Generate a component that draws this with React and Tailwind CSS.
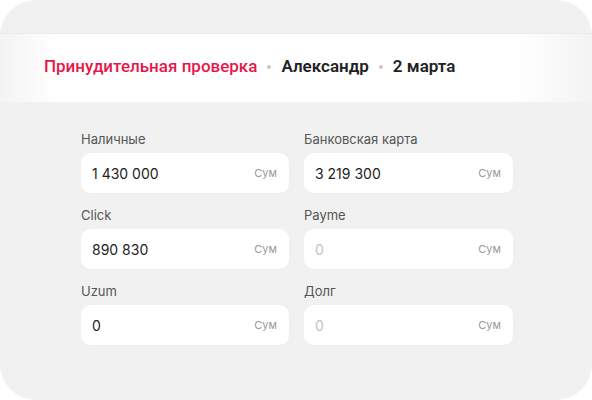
const fields = [
  { label: 'Наличные', value: '1 430 000' },
  { label: 'Банковская карта', value: '3 219 300' },
  { label: 'Click', value: '890 830' },
  { label: 'Payme', value: '', placeholder: '0' },
  { label: 'Uzum', value: '0' },
  { label: 'Долг', value: '', placeholder: '0' },
];

function Field({ label, value, placeholder }) {
  return (
    <div className="flex flex-col">
      <label className="text-[13px] leading-4 text-[#555555] mb-[6px]">{label}</label>
      <div className="h-10 bg-white rounded-[10px] flex items-center justify-between pl-[11px] pr-3">
        {value ? (
          <span className="text-[14px] text-[#222222]">{value}</span>
        ) : (
          <span className="text-[14px] text-[#c4c4c4]">{placeholder}</span>
        )}
        <span className="text-[11px] text-[#999999]">Сум</span>
      </div>
    </div>
  );
}

export default function App() {
  return (
    <div className="w-[592px] h-[400px] bg-white" style={{ fontFamily: 'Inter, sans-serif' }}>
      <div className="w-full h-full rounded-[36px] bg-[#f1f1f1] overflow-hidden pt-[33px]">
        <header
          className="h-[69px] border-t border-[#ebebeb] flex items-center pl-[44px] pb-[2px] bg-[linear-gradient(90deg,#f3f3f3,#ffffff_55px,#ffffff_calc(100%-75px),#f3f3f3)]"
          style={{ fontFamily: 'Roboto, sans-serif' }}
        >
          <span className="text-[17px] font-medium text-[#e8174a]">Принудительная проверка</span>
          <span className="mx-[10px] w-[4px] h-[4px] rounded-full bg-[#c8c8c8]"></span>
          <span className="text-[17px] font-semibold text-[#222222]">Александр</span>
          <span className="mx-[10px] w-[4px] h-[4px] rounded-full bg-[#c8c8c8]"></span>
          <span className="text-[17px] font-semibold text-[#222222]">2 марта</span>
        </header>

        <main className="pt-[29px] pl-[81px]">
          <div className="grid grid-cols-[208px_209px] gap-x-[15px] gap-y-[14px]">
            {fields.map((f) => (
              <Field key={f.label} {...f} />
            ))}
          </div>
        </main>
      </div>
    </div>
  );
}
